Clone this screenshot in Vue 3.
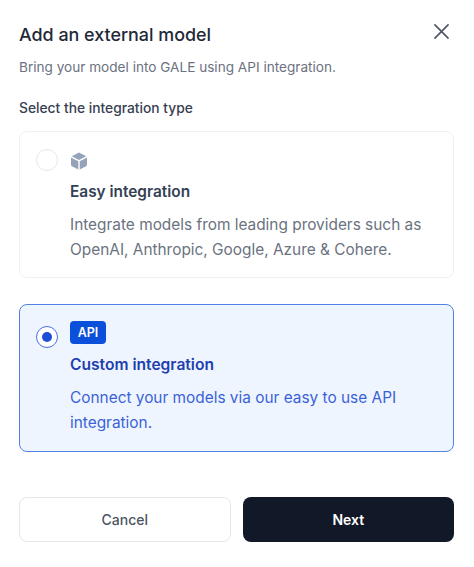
<template>
  <div class="modal">
    <header class="head">
      <h1 class="title">Add an external model</h1>
      <button class="close" aria-label="Close">
        <svg width="15" height="15" viewBox="0 0 16 16" fill="none" stroke="#4b5563" stroke-width="1.7" stroke-linecap="round">
          <path d="M1 1l14 14M15 1L1 15" />
        </svg>
      </button>
    </header>
    <p class="sub">Bring your model into GALE using API integration.</p>
    <h2 class="label">Select the integration type</h2>

    <div class="options">
      <div v-for="opt in options" :key="opt.name" class="option" :class="{ active: opt.active }">
        <span class="radio"><span v-if="opt.active" class="dot"></span></span>
        <div class="body">
          <span v-if="opt.active" class="badge">API</span>
          <svg v-else class="cube" width="18" height="18" viewBox="0 0 18 18" fill="#94a3b8">
            <path d="M9 .6l7.2 3.7L9 8 1.8 4.3z" />
            <path d="M1 5.6l7.3 3.7v8.2L1.9 14.2a1.6 1.6 0 0 1-.9-1.4z" />
            <path d="M17 5.6L9.7 9.3v8.2l6.4-3.3a1.6 1.6 0 0 0 .9-1.4z" />
          </svg>
          <h3 class="name">{{ opt.name }}</h3>
          <p class="desc">{{ opt.desc }}</p>
        </div>
      </div>
    </div>

    <footer class="actions">
      <button class="btn cancel">Cancel</button>
      <button class="btn next">Next</button>
    </footer>
  </div>
</template>

<script setup>
const options = [
  {
    name: 'Easy integration',
    desc: 'Integrate models from leading providers such as OpenAI, Anthropic, Google, Azure & Cohere.',
    active: false
  },
  {
    name: 'Custom integration',
    desc: 'Connect your models via our easy to use API integration.',
    active: true
  }
];
</script>

<style>
html, body {
  background: #fff;
}
</style>

<style scoped>
.modal {
  width: 474px;
  height: 567px;
  box-sizing: border-box;
  padding: 22px 20px 0 19px;
  font-family: Inter, "Noto Sans", sans-serif;
  background: #fff;
}
.head {
  display: flex;
  justify-content: space-between;
  align-items: flex-start;
  padding-right: 5px;
}
.title {
  margin: 0;
  font-size: 17.9px;
  line-height: 26px;
  font-weight: 500;
  color: #1f2937;
}
.close {
  margin-top: 2px;
  padding: 0;
  border: none;
  background: none;
  line-height: 0;
}
.sub {
  margin: 9px 0 0;
  font-size: 13.6px;
  line-height: 20px;
  color: #6b7280;
}
.label {
  margin: 21px 0 0;
  font-size: 13.8px;
  line-height: 20px;
  font-weight: 500;
  color: #374151;
}
.options {
  display: flex;
  flex-direction: column;
  gap: 26px;
  margin-top: 13px;
}
.option {
  display: flex;
  gap: 12px;
  box-sizing: border-box;
  height: 147px;
  padding: 17px 17px 0 16px;
  border: 1px solid #eef0f3;
  border-radius: 8px;
}
.option.active {
  height: 148px;
  padding-top: 16px;
  border-color: #4f82e3;
  background: #eff5ff;
}
.radio {
  flex: none;
  display: flex;
  align-items: center;
  justify-content: center;
  box-sizing: border-box;
  width: 22px;
  height: 22px;
  margin-top: 0;
  border: 1.5px solid #e5e7eb;
  border-radius: 50%;
  background: #fff;
}
.active .radio {
  margin-top: 5px;
  border-color: #4a6ee0;
}
.dot {
  width: 10px;
  height: 10px;
  border-radius: 50%;
  background: #1d4ed8;
}
.body {
  flex: 1;
  min-width: 0;
}
.cube {
  display: block;
  margin-top: 3px;
}
.badge {
  display: block;
  width: 36px;
  height: 23px;
  border-radius: 4px;
  background: #0b50da;
  color: #fff;
  font-size: 12.5px;
  font-weight: 600;
  line-height: 23px;
  text-align: center;
}
.name {
  margin: 11px 0 0;
  font-size: 15.4px;
  line-height: 22px;
  font-weight: 600;
  color: #334155;
}
.active .name {
  margin-top: 10px;
  font-size: 15.6px;
  color: #1e40af;
}
.desc {
  margin: 9px 0 0;
  font-size: 15.4px;
  line-height: 25px;
  color: #6b7280;
}
.active .desc {
  color: #3a62d7;
}
.actions {
  display: grid;
  grid-template-columns: 1fr 1fr;
  gap: 12px;
  margin-top: 45px;
}
.btn {
  height: 45px;
  border-radius: 8px;
  font-family: inherit;
  font-size: 14px;
  font-weight: 600;
}
.cancel {
  border: 1.5px solid #e5e7eb;
  background: #fff;
  color: #4b5563;
  font-weight: 500;
}
.next {
  border: none;
  background: #111827;
  color: #fff;
}
</style>
